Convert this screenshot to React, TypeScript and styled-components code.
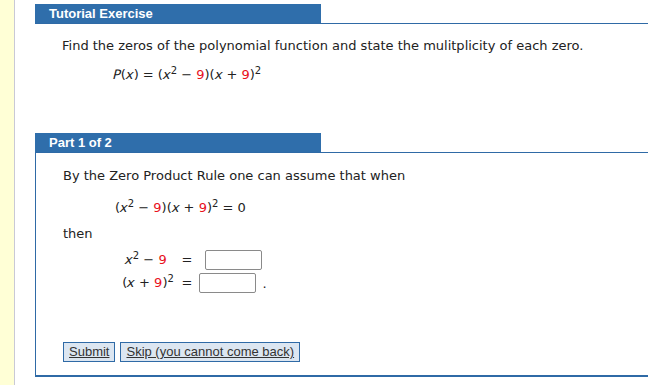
import React from "react";
import styled, { createGlobalStyle } from "styled-components";

const Global = createGlobalStyle`
  *, *::before, *::after { box-sizing: border-box; }
  html, body { margin: 0; padding: 0; background: #fff; }
  body { font-family: "DejaVu Sans", Verdana, sans-serif; color: #222; }
`;

const Page = styled.div`
  display: flex;
  width: 648px;
  height: 385px;
  overflow: hidden;
`;

const Strip = styled.div`
  width: 15px;
  flex: none;
  background: #ffffd6;
  border-right: 1px solid #c9c9d6;
`;

const Main = styled.div`
  flex: 1;
  padding: 4px 0 0 20px;
`;

const HeaderRow = styled.div`
  border-bottom: 1px solid #2f6aa6;
`;

const HeaderTab = styled.div`
  width: 286px;
  height: 19px;
  background: #2f6eab;
  color: #fff;
  font-family: "Liberation Sans", Arial, sans-serif;
  font-weight: bold;
  font-size: 13px;
  line-height: 19px;
  padding-left: 14px;
`;

const Intro = styled.div`
  height: 109px;
  padding: 14px 0 0 27px;
  font-size: 13px;
`;

const Line = styled.div<{ $indent?: number; $top?: number }>`
  margin-left: ${(p) => p.$indent ?? 0}px;
  margin-top: ${(p) => p.$top ?? 0}px;
  line-height: 16px;
  white-space: nowrap;
`;

const PartBody = styled.div`
  border-left: 1px solid #2f6aa6;
  border-bottom: 2px solid #2f6aa6;
  height: 224px;
  padding: 15px 0 0 27px;
  font-size: 13px;
`;

const Var = styled.span`
  display: inline-block;
  transform: skewX(-14deg);
`;

const Red = styled.span`
  color: #e8101c;
`;

const Sup = styled.sup`
  font-size: 10px;
  vertical-align: 5px;
  line-height: 0;
`;

const AnsGrid = styled.div`
  margin-top: 8px;
  margin-left: 55px;
  display: grid;
  width: 152px;
  grid-template-columns: 60px 18px 74px;
  row-gap: 3px;
  align-items: center;
  justify-items: center;
`;

const Cell = styled.div`
  line-height: 20px;
  white-space: nowrap;
`;

const BoxCell = styled.div`
  display: flex;
  align-items: center;
`;

const Box = styled.div`
  width: 57px;
  height: 20px;
  border: 1px solid #8a8a8a;
  border-radius: 2px;
  background: #fff;
`;

const Dot = styled.span`
  margin-left: 6px;
`;

const Buttons = styled.div`
  margin-top: 49px;
  display: flex;
  gap: 5px;
`;

const Btn = styled.button`
  height: 20px;
  padding: 0 5px;
  border: 1px solid #2f6aa6;
  background: #dce6f1;
  color: #333;
  font-family: "Liberation Sans", Arial, sans-serif;
  font-size: 13px;
  line-height: 16px;
  text-decoration: underline;
  cursor: pointer;
`;

export default function App() {
  return (
    <>
      <Global />
      <Page>
        <Strip />
        <Main>
          <HeaderRow>
            <HeaderTab>Tutorial Exercise</HeaderTab>
          </HeaderRow>
          <Intro>
            <Line>
              Find the zeros of the polynomial function and state the mulitplicity of each zero.
            </Line>
            <Line $indent={51} $top={13}>
              <Var>P</Var>(<Var>x</Var>) = (<Var>x</Var>
              <Sup>2</Sup> − <Red>9</Red>)(<Var>x</Var> + <Red>9</Red>)<Sup>2</Sup>
            </Line>
          </Intro>
          <section>
            <HeaderRow>
              <HeaderTab>Part 1 of 2</HeaderTab>
            </HeaderRow>
            <PartBody>
              <Line>By the Zero Product Rule one can assume that when</Line>
              <Line $indent={52} $top={16}>
                (<Var>x</Var>
                <Sup>2</Sup> − <Red>9</Red>)(<Var>x</Var> + <Red>9</Red>)<Sup>2</Sup> = 0
              </Line>
              <Line $top={10}>then</Line>
              <AnsGrid>
                <Cell>
                  <Var>x</Var>
                  <Sup>2</Sup> − <Red>9</Red>&nbsp;
                </Cell>
                <Cell>=</Cell>
                <BoxCell>
                  <Box />
                </BoxCell>
                <Cell>
                  (<Var>x</Var> + <Red>9</Red>)<Sup>2</Sup>
                </Cell>
                <Cell>=</Cell>
                <BoxCell>
                  <Box />
                  <Dot>.</Dot>
                </BoxCell>
              </AnsGrid>
              <Buttons>
                <Btn>Submit</Btn>
                <Btn>Skip (you cannot come back)</Btn>
              </Buttons>
            </PartBody>
          </section>
        </Main>
      </Page>
    </>
  );
}
